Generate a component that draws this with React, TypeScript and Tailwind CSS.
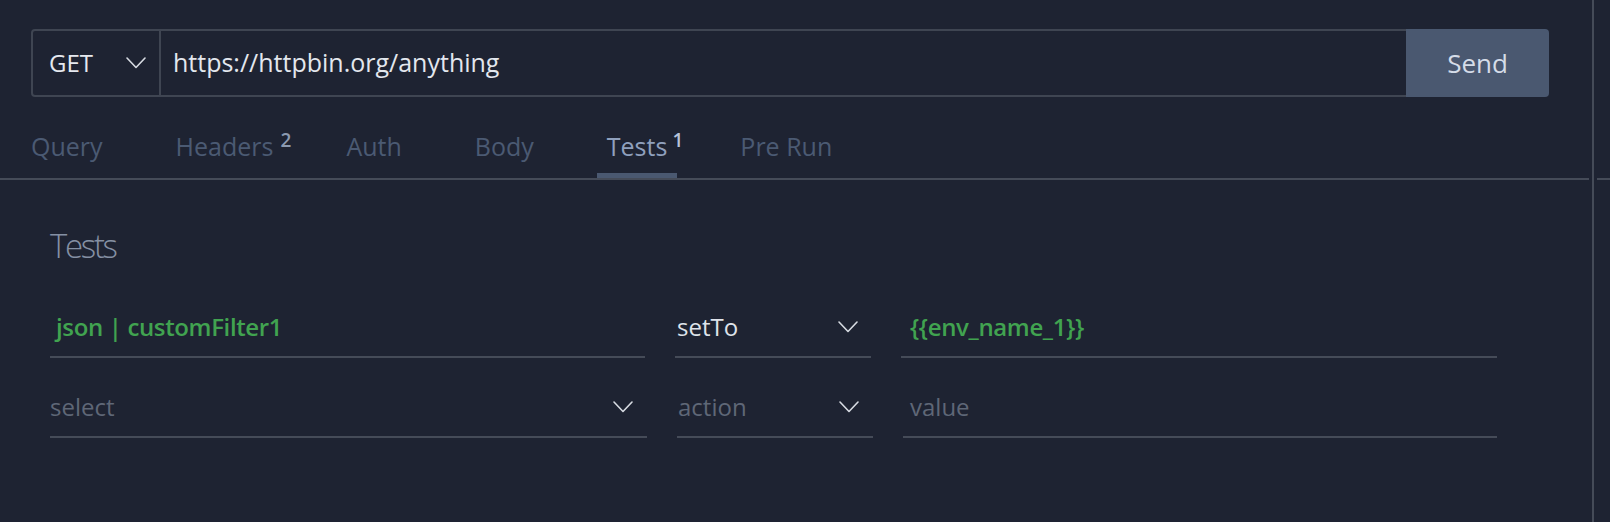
import * as React from "react";

const Chevron = ({ className }: { className?: string }) => (
  <svg viewBox="0 0 20 12" className={className} fill="none">
    <polyline points="1,1 10,10.5 19,1" stroke="currentColor" strokeWidth="1.6" strokeLinejoin="round" strokeLinecap="round" />
  </svg>
);

type Tab = { label: string; count?: number };

const tabs: Tab[] = [
  { label: "Query" },
  { label: "Headers", count: 2 },
  { label: "Auth" },
  { label: "Body" },
  { label: "Tests", count: 1 },
  { label: "Pre Run" },
];

const App: React.FC = () => {
  const active = "Tests";

  return (
    <div
      className="flex h-[522px] w-[1610px] overflow-hidden bg-[#1e2332]"
      style={{ fontFamily: '"Open Sans", "Noto Sans", sans-serif' }}
    >
      {/* request panel */}
      <div className="flex w-[1589px] flex-col">
        <div className="pl-[31px] pr-[40px] pt-[29px]">
          <div className="flex h-[68px]">
            <div className="flex w-[130px] items-center justify-between rounded-l-[4px] border-2 border-[#3f4552] pl-[16px] pr-[13px] text-[24px] text-[#e6e9ef]">
              <span>GET</span>
              <Chevron className="h-[12px] w-[20px] text-[#d7dbe2]" />
            </div>
            <div className="flex flex-1 items-center border-y-2 border-r-0 border-[#3f4552] pl-[12px] text-[25px] text-[#e3e7ee]">
              https://httpbin.org/anything
            </div>
            <button className="w-[143px] rounded-r-[4px] bg-[#4a5870] text-[26px] text-[#d5dce8]">
              Send
            </button>
          </div>
        </div>

        {/* tabs */}
        <div className="mt-[33px] flex gap-[53px] border-b-2 border-[#454b58] pl-[21px]">
          {tabs.map((tab) => {
            const isActive = tab.label === active;
            return (
              <div
                key={tab.label}
                className={`relative border-b-[5px] px-[10px] pb-[11px] text-[25px] leading-[32px] ${
                  isActive ? "border-[#4a5870] text-[#8fa0bd]" : "border-transparent text-[#4b5a73]"
                }`}
              >
                {tab.label}
                {tab.count !== undefined && (
                  <span
                    className={`absolute top-[1px] text-[19px] font-semibold leading-none ${
                      isActive ? "right-[-6px] text-[#b5c3d9]" : "right-[-8px] text-[#8c9ab0]"
                    }`}
                  >
                    {tab.count}
                  </span>
                )}
              </div>
            );
          })}
        </div>

        {/* tests */}
        <div className="pl-[50px] pt-[46px]">
          <h2 className="text-[33px] font-light leading-[40px] tracking-[-0.07em] text-[#8590a3]">Tests</h2>

          <div className="mt-[32px] flex gap-[30px]">
            <div className="w-[595px] border-b-2 border-[#454b58] pb-[13px] pl-[6px] pt-[13px] text-[24px] font-semibold leading-[32px] tracking-[-0.015em] text-[#41a350]">
              json | customFilter1
            </div>
            <div className="flex w-[196px] items-center justify-between border-b-2 border-[#454b58] pb-[13px] pl-[2px] pr-[13px] pt-[13px] text-[24px] leading-[32px] text-[#dfe3ea]">
              <span>setTo</span>
              <Chevron className="h-[12px] w-[20px] text-[#d7dbe2]" />
            </div>
            <div className="w-[596px] border-b-2 border-[#454b58] pb-[13px] pl-[9px] pt-[13px] text-[24px] font-semibold leading-[32px] tracking-[-0.015em] text-[#41a350]">
              {"{{env_name_1}}"}
            </div>
          </div>

          <div className="mt-[20px] flex gap-[30px]">
            <div className="flex w-[597px] items-center justify-between border-b-2 border-[#454b58] pb-[13px] pl-[0px] pr-[14px] pt-[13px] text-[24px] leading-[32px] text-[#5f6777]">
              <span>select</span>
              <Chevron className="h-[12px] w-[20px] text-[#d7dbe2]" />
            </div>
            <div className="flex w-[196px] items-center justify-between border-b-2 border-[#454b58] pb-[13px] pl-[1px] pr-[14px] pt-[13px] text-[24px] leading-[32px] text-[#5f6777]">
              <span>action</span>
              <Chevron className="h-[12px] w-[20px] text-[#d7dbe2]" />
            </div>
            <div className="w-[594px] border-b-2 border-[#454b58] pb-[13px] pl-[7px] pt-[13px] text-[24px] leading-[32px] text-[#5f6777]">
              value
            </div>
          </div>
        </div>
      </div>

      {/* resize handle */}
      <div className="flex w-[8px] justify-center">
        <div className="h-full w-[2px] bg-[#454b58]" />
      </div>

      {/* response panel edge */}
      <div className="flex-1">
        <div className="mt-[178px] h-[2px] bg-[#454b58]" />
      </div>
    </div>
  );
};

export default App;
